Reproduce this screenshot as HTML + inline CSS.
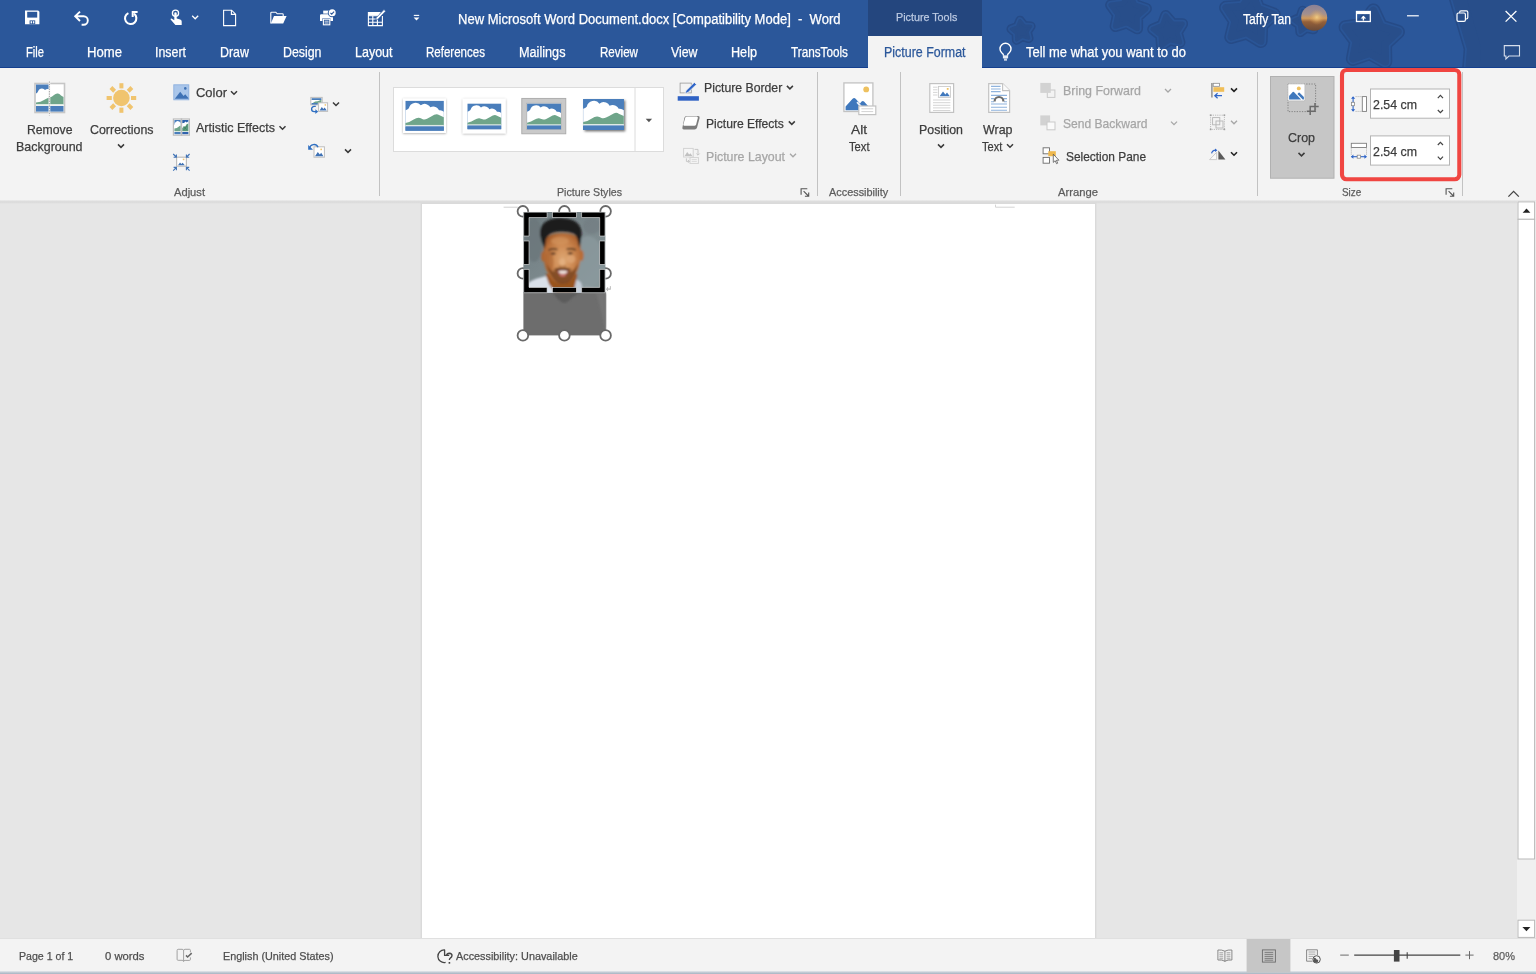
<!DOCTYPE html>
<html lang="en">
<head>
<meta charset="utf-8">
<title>New Microsoft Word Document.docx [Compatibility Mode] - Word</title>
<style>
html,body{margin:0;padding:0;}
body{width:1536px;height:974px;overflow:hidden;background:#e6e6e6;font-family:"Liberation Sans",sans-serif;}
#app{position:relative;width:1536px;height:974px;overflow:hidden;}
.a{position:absolute;}
.t{position:absolute;white-space:pre;line-height:1;transform-origin:0 0;font-family:"Liberation Sans",sans-serif;-webkit-text-stroke:0.25px currentColor;}
svg{position:absolute;overflow:visible;}
.sep{position:absolute;width:1px;background:#c2c2c2;top:72px;height:124px;}
</style>
</head>
<body>
<div id="app">

<!-- ===== title bar + tab row ===== -->
<div class="a" id="titlebar" style="left:0;top:0;width:1536px;height:68px;background:#2b579a;"></div>
<!--STARS-START-->
<svg id="stars" width="1536" height="68" viewBox="0 0 1536 68" style="left:0;top:0;overflow:hidden" fill="none">
<polygon points="1020.0,20.4 1024.2,25.7 1030.9,26.2 1027.2,31.8 1028.8,38.4 1022.3,36.5 1016.6,40.1 1016.3,33.3 1011.2,29.0 1017.5,26.6" fill="#264b87" stroke="#264b87" stroke-width="9.4" stroke-linejoin="round"/>
<polygon points="1020.0,20.4 1024.2,25.7 1030.9,26.2 1027.2,31.8 1028.8,38.4 1022.3,36.5 1016.6,40.1 1016.3,33.3 1011.2,29.0 1017.5,26.6" fill="#2a5596" stroke="#2a5596" stroke-width="6.4" stroke-linejoin="round"/>
<polygon points="1020.0,20.4 1024.2,25.7 1030.9,26.2 1027.2,31.8 1028.8,38.4 1022.3,36.5 1016.6,40.1 1016.3,33.3 1011.2,29.0 1017.5,26.6" fill="#284e8a" stroke="#284e8a" stroke-width="2.9" stroke-linejoin="round"/>
<polygon points="1129.8,-5.9 1134.7,4.9 1146.0,8.7 1137.2,16.6 1137.2,28.5 1126.8,22.6 1115.5,26.2 1117.9,14.6 1111.0,5.0 1122.8,3.7" fill="#264b87" stroke="#264b87" stroke-width="11.7" stroke-linejoin="round"/>
<polygon points="1129.8,-5.9 1134.7,4.9 1146.0,8.7 1137.2,16.6 1137.2,28.5 1126.8,22.6 1115.5,26.2 1117.9,14.6 1111.0,5.0 1122.8,3.7" fill="#2a5596" stroke="#2a5596" stroke-width="8.7" stroke-linejoin="round"/>
<polygon points="1129.8,-5.9 1134.7,4.9 1146.0,8.7 1137.2,16.6 1137.2,28.5 1126.8,22.6 1115.5,26.2 1117.9,14.6 1111.0,5.0 1122.8,3.7" fill="#284e8a" stroke="#284e8a" stroke-width="5.2" stroke-linejoin="round"/>
<polygon points="1165.7,15.5 1172.4,23.4 1182.6,23.8 1177.2,32.5 1180.0,42.4 1170.0,40.0 1161.5,45.7 1160.7,35.4 1152.7,29.1 1162.2,25.2" fill="#264b87" stroke="#264b87" stroke-width="11.0" stroke-linejoin="round"/>
<polygon points="1165.7,15.5 1172.4,23.4 1182.6,23.8 1177.2,32.5 1180.0,42.4 1170.0,40.0 1161.5,45.7 1160.7,35.4 1152.7,29.1 1162.2,25.2" fill="#2a5596" stroke="#2a5596" stroke-width="8.0" stroke-linejoin="round"/>
<polygon points="1165.7,15.5 1172.4,23.4 1182.6,23.8 1177.2,32.5 1180.0,42.4 1170.0,40.0 1161.5,45.7 1160.7,35.4 1152.7,29.1 1162.2,25.2" fill="#284e8a" stroke="#284e8a" stroke-width="4.5" stroke-linejoin="round"/>
<polygon points="1252.3,-6.5 1258.5,8.7 1273.9,14.4 1261.4,24.9 1260.8,41.3 1246.8,32.7 1231.1,37.1 1235.0,21.2 1225.9,7.6 1242.2,6.4" fill="#264b87" stroke="#264b87" stroke-width="13.6" stroke-linejoin="round"/>
<polygon points="1252.3,-6.5 1258.5,8.7 1273.9,14.4 1261.4,24.9 1260.8,41.3 1246.8,32.7 1231.1,37.1 1235.0,21.2 1225.9,7.6 1242.2,6.4" fill="#2a5596" stroke="#2a5596" stroke-width="10.6" stroke-linejoin="round"/>
<polygon points="1252.3,-6.5 1258.5,8.7 1273.9,14.4 1261.4,24.9 1260.8,41.3 1246.8,32.7 1231.1,37.1 1235.0,21.2 1225.9,7.6 1242.2,6.4" fill="#284e8a" stroke="#284e8a" stroke-width="7.1" stroke-linejoin="round"/>
<polygon points="1302.6,10.5 1307.6,15.9 1315.0,15.9 1311.3,22.4 1313.5,29.4 1306.3,27.9 1300.3,32.2 1299.5,24.9 1293.6,20.5 1300.3,17.5" fill="#264b87" stroke="#264b87" stroke-width="9.7" stroke-linejoin="round"/>
<polygon points="1302.6,10.5 1307.6,15.9 1315.0,15.9 1311.3,22.4 1313.5,29.4 1306.3,27.9 1300.3,32.2 1299.5,24.9 1293.6,20.5 1300.3,17.5" fill="#2a5596" stroke="#2a5596" stroke-width="6.7" stroke-linejoin="round"/>
<polygon points="1302.6,10.5 1307.6,15.9 1315.0,15.9 1311.3,22.4 1313.5,29.4 1306.3,27.9 1300.3,32.2 1299.5,24.9 1293.6,20.5 1300.3,17.5" fill="#284e8a" stroke="#284e8a" stroke-width="3.2" stroke-linejoin="round"/>
<polygon points="1373.4,10.6 1380.9,26.6 1397.8,31.8 1384.9,43.9 1385.2,61.6 1369.7,53.1 1353.0,58.8 1356.3,41.4 1345.7,27.3 1363.2,25.0" fill="#264b87" stroke="#264b87" stroke-width="14.2" stroke-linejoin="round"/>
<polygon points="1373.4,10.6 1380.9,26.6 1397.8,31.8 1384.9,43.9 1385.2,61.6 1369.7,53.1 1353.0,58.8 1356.3,41.4 1345.7,27.3 1363.2,25.0" fill="#2a5596" stroke="#2a5596" stroke-width="11.2" stroke-linejoin="round"/>
<polygon points="1373.4,10.6 1380.9,26.6 1397.8,31.8 1384.9,43.9 1385.2,61.6 1369.7,53.1 1353.0,58.8 1356.3,41.4 1345.7,27.3 1363.2,25.0" fill="#284e8a" stroke="#284e8a" stroke-width="7.7" stroke-linejoin="round"/>
<polygon points="1455.0,-16.0 1520.1,-31.6 1575.3,-69.6 1610.3,-12.5 1663.4,28.3 1619.9,79.2 1597.6,142.3 1535.7,116.7 1468.8,114.9 1474.0,48.2" fill="#264b87" stroke="#264b87" stroke-width="20.5" stroke-linejoin="round"/>
<polygon points="1455.0,-16.0 1520.1,-31.6 1575.3,-69.6 1610.3,-12.5 1663.4,28.3 1619.9,79.2 1597.6,142.3 1535.7,116.7 1468.8,114.9 1474.0,48.2" fill="#2a5596" stroke="#2a5596" stroke-width="17.5" stroke-linejoin="round"/>
<polygon points="1455.0,-16.0 1520.1,-31.6 1575.3,-69.6 1610.3,-12.5 1663.4,28.3 1619.9,79.2 1597.6,142.3 1535.7,116.7 1468.8,114.9 1474.0,48.2" fill="#284e8a" stroke="#284e8a" stroke-width="14.0" stroke-linejoin="round"/>
<defs><linearGradient id="avg" x1="0" y1="0" x2="0" y2="1"><stop offset="0" stop-color="#8a8196"/><stop offset="0.360" stop-color="#a3908f"/><stop offset="0.520" stop-color="#cf9a5e"/><stop offset="0.660" stop-color="#94603a"/><stop offset="1" stop-color="#6a4a38"/></linearGradient>
<radialGradient id="avr" cx="0.600" cy="0.480" r="0.300"><stop offset="0" stop-color="#f3cf86" stop-opacity="0.900"/><stop offset="1" stop-color="#e0a050" stop-opacity="0"/></radialGradient>
</defs>
<circle cx="1314.200" cy="17.700" r="13" fill="url(#avg)"/>
<circle cx="1314.200" cy="17.700" r="13" fill="url(#avr)"/>
</svg><!--STARS-END-->
<div class="a" style="left:0;top:67px;width:1536px;height:1px;background:#143f8f;"></div>
<div class="a" id="picturetools" style="left:868px;top:0;width:114px;height:36px;background:#24467e;"></div>
<div class="a" id="activetab" style="left:868px;top:35.500px;width:114px;height:33.500px;background:#f3f3f3;"></div>

<!-- ===== ribbon ===== -->
<div class="a" id="ribbon" style="left:0;top:68px;width:1536px;height:132px;background:#f3f3f3;"></div>
<div class="a" style="left:0;top:199.800px;width:1536px;height:4.200px;background:linear-gradient(#eeeeee 0%,#dddddd 35%,#dcdcdc 60%,#e6e6e6 100%);"></div>
<div class="sep" style="left:379px;"></div>
<div class="sep" style="left:817px;"></div>
<div class="sep" style="left:900px;"></div>
<div class="sep" style="left:1257px;"></div>
<div class="sep" style="left:1462px;"></div>

<!--QAT-START-->
<svg id="qat" width="1536" height="70" viewBox="0 0 1536 70" style="left:0;top:0" fill="none" stroke="none">
<!-- save -->
<path d="M25 10.6h13.2l1.2 1.2v12.4H25z" fill="#fff"/>
<rect x="27.2" y="11.8" width="10" height="5.8" fill="#2b579a"/>
<rect x="29.6" y="20.4" width="5.6" height="3.8" fill="#2b579a"/>
<rect x="30.6" y="21.2" width="1.4" height="2.2" fill="#fff"/>
<rect x="32.9" y="21.2" width="1.4" height="2.2" fill="#fff"/>
<!-- undo -->
<path d="M80 11.6L75.2 16.3L80 21M75.6 16.3H83.6a4.2 4.2 0 0 1 0 8.4H81.6" stroke="#fff" stroke-width="1.9" stroke-linecap="butt" stroke-linejoin="miter"/>
<!-- repeat -->
<path d="M128.4 13.1a5.7 5.7 0 1 0 5.6 0.6" stroke="#fff" stroke-width="2.1"/>
<path d="M137.6 11.9H132.700V17" stroke="#fff" stroke-width="2"/>
<!-- touch -->
<circle cx="175.5" cy="13.300" r="3.100" stroke="#fff" stroke-width="1.300"/>
<path d="M174.300 13.400a1.200 1.200 0 0 1 2.400 0V18.400L180.200 19.600Q181.700 20.200 181.700 21.600V25H175.400L170.600 19.600Q170.300 18.400 171.500 18.400L174.300 20.300Z" fill="#fff"/>
<path d="M192.2 15.8l3 3l3-3" stroke="#fff" stroke-width="1.3"/>
<!-- new doc -->
<path d="M223.6 10.2h8l4 4v11.4h-12z M231.4 10.4v4h4" stroke="#fff" stroke-width="1.1"/>
<!-- open folder -->
<path d="M270.8 23.4v-10.4q0-0.8 0.8-0.8h4.2l1.4 1.6h5.2q0.8 0 0.8 0.8v1.4" stroke="#fff" stroke-width="1.1"/>
<path d="M270.8 23.6l3.2-7.6h12.6l-3.4 7.6z" fill="#fff"/>
<!-- printer check -->
<path d="M320 15.4q0-1.2 1.2-1.2h10.600q1.2 0 1.2 1.200v5.6h-2.6v-2.8h-8v2.8h-2.4z" fill="#fff"/>
<rect x="323.200" y="10.600" width="6.000" height="3.000" fill="#fff"/>
<rect x="323.4" y="19.2" width="6.4" height="5.6" stroke="#fff" stroke-width="1.1"/>
<path d="M324.6 21.200h4M324.6 23.000h4" stroke="#fff" stroke-width="0.8"/>
<circle cx="332.2" cy="12.8" r="4.4" fill="#2b579a"/>
<circle cx="332.2" cy="12.8" r="3.5" fill="#fff"/>
<path d="M330.400 12.900l1.300 1.300l2.400-2.600" stroke="#2b579a" stroke-width="1.1"/>
<!-- table pen -->
<path d="M368.400 12.600h11.6v3.200h-11.6zM368.400 15.800v9.800h14v-9.600M372.800 15.800v9.800M377.400 17.800v7.800M368.400 19h8M368.400 22.300h14" stroke="#fff" stroke-width="1.1"/>
<rect x="368.400" y="12.600" width="11.000" height="3.000" fill="#fff"/>
<path d="M384.000 9.600l1.600 1.600l-7.600 8.000l-2.400 0.800l0.800-2.400z" fill="#fff" stroke="#2b579a" stroke-width="0.600"/>
<!-- customize -->
<path d="M413.800 15.400h5.400" stroke="#fff" stroke-width="1.100"/>
<path d="M413.600 17.400h5.800l-2.900 3.200z" fill="#fff"/>
<!-- bulb -->
<path d="M1003.500 55.800V55.200Q1003.200 54 1001.700 52.800A5.500 5.500 0 1 1 1009.300 52.800Q1007.800 54 1007.500 55.200V55.800" stroke="#fff" stroke-width="1.400"/>
<rect x="1002.900" y="55.400" width="5.200" height="3" fill="#e6ebf3"/>
<rect x="1004" y="58.400" width="3" height="2.300" fill="#ccd5e5"/>
<!-- ribbon display options -->
<rect x="1356.500" y="11.500" width="13.800" height="10" stroke="#fff" stroke-width="1.300"/>
<rect x="1356.500" y="11.500" width="13.800" height="2.600" fill="#fff"/>
<path d="M1363.400 20.600v-4.400" stroke="#fff" stroke-width="1.400"/>
<path d="M1360.600 18.600l2.800-2.900l2.800 2.900z" fill="#fff"/>
<!-- minimize -->
<path d="M1407.000 15.800h11.800" stroke="#fff" stroke-width="1.200"/>
<!-- restore -->
<rect x="1457.000" y="13.000" width="8.400" height="8.400" rx="1.400" stroke="#fff" stroke-width="1.200"/>
<path d="M1459.600 12.800v-0.600q0-1.400 1.400-1.400h5.400q1.400 0 1.400 1.400v5.400q0 1.400-1.400 1.400h-0.600" stroke="#fff" stroke-width="1.200"/>
<!-- close -->
<path d="M1505.600 11.000l10.800 10.600M1516.400 11.000l-10.800 10.600" stroke="#fff" stroke-width="1.300"/>
<!-- comments -->
<path d="M1504.300 45.600h15.200v10.400h-10.600l-3.000 3.000v-3.000h-1.600z" stroke="#d6deec" stroke-width="1.100"/>
</svg>
<!--QAT-END-->
<!--RIB1-START-->
<svg id="rib1" width="1536" height="210" viewBox="0 0 1536 210" style="left:0;top:0" fill="none" stroke="none">
<defs>
<g id="chev"><path d="M0 0l3 3l3-3" stroke="#3a3a3a" stroke-width="1.500" fill="none"/></g>
<g id="chevg"><path d="M0 0l3 3l3-3" stroke="#a6a6a6" stroke-width="1.3" fill="none"/></g>
<!-- landscape thumbnail 40x30 : sky, cloud, hill, band -->
<g id="land">
<rect x="0" y="0" width="40" height="30" fill="#4a7ebb"/>
<path d="M0 26V9.500q2-0.500 3.500-2q1-4.500 5.500-5.500q4.500-1 7 2.500q3-2.500 6.500-1q2.500 1 3.500 3q3-1.500 6 0q2 1 3 3q3-0.500 5 1.500V26z" fill="#fff"/>
<path d="M0 25V22.300q5-1 8.500-3.500q3-2 5.500-1.800q2 0.400 4 1.400q2 0.800 4.500-0.400q4-2 7.500-4q3-1.500 5 0.300l5 2.200V25z" fill="#6fa58a"/>
<rect x="0" y="24.200" width="40" height="1.500" fill="#dfe9e4"/>
<rect x="0" y="25.600" width="40" height="4.400" fill="#4a7ebb"/>
</g>
</defs>
<!-- Remove Background -->
<rect x="35" y="83.500" width="29.500" height="29" fill="#fff" stroke="#c6c6c6" stroke-width="1.600"/>
<rect x="36" y="84.500" width="13" height="13" fill="#4a7ebb"/>
<path d="M36 103V93.500q1.500-0.500 2-2q1-3 4-3q2 0 3 1.500q1.500-1.500 3.500-1h0.800V103z" fill="#fff"/>
<path d="M36 104.500V102.600q5-0.300 8-2.600q2-1.500 5-2.500q3-0.500 5-2.500q2-2 4-1.500q2 0.300 3 2l2.500 1.500V104.500z" fill="#6fa58a"/>
<rect x="36" y="104.300" width="27.500" height="1.700" fill="#eef3ef"/>
<rect x="36" y="106" width="27.500" height="5.600" fill="#4a7ebb"/>
<path d="M49.400 81.500V115.500" stroke="#f3f3f3" stroke-width="1.800"/>
<path d="M49.400 81.500V115.500" stroke="#8a8a8a" stroke-width="0.800" stroke-dasharray="1.200 1.200"/>
<!-- Corrections sun -->
<g fill="#f0c46e">
<circle cx="121.400" cy="98" r="8.300"/>
<g id="ray"><rect x="119.400" y="83.200" width="4" height="5.200"/></g>
<use href="#ray" transform="rotate(45 121.400 98)"/>
<use href="#ray" transform="rotate(90 121.400 98)"/>
<use href="#ray" transform="rotate(135 121.400 98)"/>
<use href="#ray" transform="rotate(180 121.400 98)"/>
<use href="#ray" transform="rotate(225 121.400 98)"/>
<use href="#ray" transform="rotate(270 121.400 98)"/>
<use href="#ray" transform="rotate(315 121.400 98)"/>
</g>
<use href="#chev" x="118" y="144.400"/>
<!-- Color -->
<rect x="173.800" y="84.800" width="15" height="15" fill="#aac6ea" stroke="#8db0df" stroke-width="0.900"/>
<path d="M174.800 98.800l5.400-7l3.400 4.200l1.600-1.800l3.200 3.800v0.800z" fill="#3f72b5"/>
<circle cx="185.300" cy="88.400" r="1.300" fill="#3f72b5"/>
<use href="#chev" x="231" y="91.300"/>
<!-- Artistic effects -->
<rect x="173.400" y="119" width="16" height="16.200" fill="#fff" stroke="#bdbdbd" stroke-width="1.200"/>
<rect x="174.400" y="120" width="6.300" height="5" fill="#4a7ebb"/>
<path d="M174.400 130V124q1-2.500 3-3q2 0 3.300 2V130z" fill="#fff"/>
<path d="M174.400 131.200V128.600q3-0.300 6.300-3.300V131.200z" fill="#6fa58a"/>
<rect x="174.400" y="132" width="6.300" height="2.200" fill="#4a7ebb"/>
<rect x="182.200" y="120" width="6.200" height="3.600" fill="#2f62ad"/>
<path d="M182.200 123h2l1-1.400l1.600 1l1.600-1.400v3.400h-6.200z" fill="#fff"/>
<path d="M182.200 131.200V128q2-2 3-1.600q1.200-3 3.200-3V131.200z" fill="#5d9a7c"/>
<path d="M183.600 126.400l3 3.200M186.800 126.200l-3 3.600" stroke="#3c7a5c" stroke-width="0.700"/>
<rect x="182.200" y="132" width="6.200" height="2.200" fill="#2f62ad"/>
<path d="M181.450 118.400V135.800" stroke="#bdbdbd" stroke-width="1.400"/>
<use href="#chev" x="279.500" y="126.300"/>
<!-- Compress -->
<rect x="176.600" y="157.200" width="9.800" height="9" fill="#fff" stroke="#bdbdbd" stroke-width="1.200"/>
<path d="M178 165.200l2-2.800l1.400 1.600l1.200-1.200l2.200 2.400z" fill="#3f72b5"/>
<rect x="182.800" y="158.600" width="1.600" height="1.600" fill="#f0c46e"/>
<g stroke="#3f72b5" stroke-width="1.100">
<path d="M173.200 154l3 3M176.400 154.400v2.800h-2.800"/>
<path d="M189.600 154l-3 3M186.400 154.400v2.800h2.800"/>
<path d="M173.200 170.600l3-3M176.400 170.200v-2.800h-2.800"/>
<path d="M189.600 170.600l-3-3M186.400 170.200v-2.800h2.800"/>
</g>
<!-- Change picture -->
<rect x="310.800" y="97.400" width="11.400" height="7.400" fill="#fff" stroke="#bdbdbd" stroke-width="1"/>
<rect x="311.600" y="98.200" width="9.800" height="1.800" fill="#4a7ebb"/>
<path d="M311.600 103.800l3.500-2.200l2.500-0.400l3.800-1.400v4z" fill="#6fa58a"/>
<rect x="311.600" y="103" width="6" height="1.600" fill="#4a7ebb"/>
<rect x="318.600" y="102.800" width="9" height="8.600" fill="#fff" stroke="#bdbdbd" stroke-width="1"/>
<path d="M319.600 110.400l2.200-3.400l1.600 2l1.200-1.400l2.200 2.800z" fill="#3f72b5"/>
<rect x="324.600" y="104.200" width="1.500" height="1.500" fill="#f0c46e"/>
<path d="M315.800 106.400h-1.600a2.600 2.600 0 0 0 0 5.200h3.200" stroke="#2f6fc1" stroke-width="1.400"/>
<path d="M315.400 109.200l2.600 2.400l-2.600 2.400z" fill="#2f6fc1"/>
<use href="#chev" x="333" y="102.500"/>
<!-- Reset picture -->
<rect x="314" y="146.800" width="10.400" height="10.400" fill="#fff" stroke="#bdbdbd" stroke-width="1"/>
<path d="M315 156.200l2.800-4.200l2 2.400l1.400-1.600l2.200 3.400z" fill="#3f72b5"/>
<rect x="320.400" y="148.600" width="1.600" height="1.600" fill="#f0c46e"/>
<path d="M309.600 148.600a4.400 4.400 0 0 1 8.400-1.400" stroke="#2f6fc1" stroke-width="1.400"/>
<path d="M308.200 145v4.800h4.800z" fill="#2f6fc1"/>
<use href="#chev" x="345" y="149.400"/>
</svg>
<!--RIB1-END-->
<!--RIB2-START-->
<svg id="rib2" width="1536" height="210" viewBox="0 0 1536 210" style="left:0;top:0" fill="none" stroke="none">
<defs>
<filter id="sh1" x="-20%" y="-20%" width="140%" height="150%"><feDropShadow dx="0" dy="0.600" stdDeviation="0.900" flood-color="#000" flood-opacity="0.350"/></filter>
<filter id="sh4" x="-20%" y="-20%" width="150%" height="150%"><feDropShadow dx="1.400" dy="1.400" stdDeviation="0.800" flood-color="#000" flood-opacity="0.550"/></filter>
</defs>
<!-- gallery -->
<rect x="393.500" y="87.500" width="270" height="64" fill="#fff" stroke="#dcdcdc" stroke-width="1"/>
<path d="M635 88V151" stroke="#dcdcdc" stroke-width="1"/>
<path d="M645.700 118.700h6.400l-3.200 3.600z" fill="#555"/>
<!-- thumb1 -->
<rect x="403" y="98.600" width="43" height="34.400" fill="#fff" filter="url(#sh1)"/>
<use href="#land" transform="translate(405.500 100.900) scale(0.9575 0.9933)"/>
<!-- thumb2 -->
<rect x="462.700" y="98.800" width="43" height="34.600" fill="#fff" filter="url(#sh1)"/>
<use href="#land" transform="translate(467.500 103.700) scale(0.8425 0.85)"/>
<!-- thumb3 -->
<rect x="521.800" y="98.400" width="44" height="35.400" fill="#c9c9c9" stroke="#a9a9a9" stroke-width="0.900"/>
<rect x="526.600" y="103.200" width="34.800" height="26.400" fill="#fff" stroke="#b4b4b4" stroke-width="0.800"/>
<use href="#land" transform="translate(527.100 103.700) scale(0.8475 0.85)"/>
<!-- thumb4 -->
<rect x="583.200" y="99" width="40.600" height="31" fill="#4a7ebb" filter="url(#sh4)"/>
<use href="#land" transform="translate(583.200 99) scale(1.015 1.0333)"/>
<!-- Picture Border -->
<rect x="680.100" y="83.100" width="11.200" height="9.800" stroke="#9a9a9a" stroke-width="0.800"/>
<path d="M694.300 82.400l2.200 2l-8.400 8l-3.300 1.300l1.400-3.300z" fill="#2f65c8" stroke="#f3f3f3" stroke-width="0.800"/>
<rect x="677.700" y="96.200" width="21.200" height="4.500" fill="#2f62c4"/>
<use href="#chev" x="786.900" y="85.900"/>
<!-- Picture Effects -->
<path d="M686.800 115.900h11.400q1.800 0.200 1.400 2l-2.600 9.800q-0.600 1.800-2.400 1.800h-10.800q-1.800-0.200-1.400-2l2-9.800q0.400-1.600 2.400-1.800z" fill="#7d7d7d"/>
<path d="M687 116.500h9.800q1.300 0.100 1 1.400l-1.700 6.600q-0.500 1.300-1.700 1.300h-10q-1.300-0.100-1-1.400l1.800-6.600q0.500-1.200 1.800-1.300z" fill="#fff"/>
<use href="#chev" x="788.800" y="121.400"/>
<!-- Picture Layout (disabled) -->
<g opacity="0.550">
<rect x="683.600" y="148.400" width="9.600" height="8.600" fill="#fafafa" stroke="#b8b8b8" stroke-width="1"/>
<path d="M684.600 156l2.600-4l2 2.400l1.200-1.200l2 2.800z" fill="#9a9a9a"/>
<rect x="690" y="157.600" width="8.400" height="5.800" fill="#fafafa" stroke="#b8b8b8" stroke-width="1"/>
<path d="M691.600 159.600h5.200M691.600 161.400h5.200" stroke="#b8b8b8" stroke-width="0.800"/>
<path d="M694.600 149.400h3.400v5.600M696.400 153.600l1.600 1.600l1.600-1.600" stroke="#9a9a9a" stroke-width="0.900"/>
<path d="M686.400 158.400v3h2.800M688 160l1.400 1.400l-1.400 1.400" stroke="#9a9a9a" stroke-width="0.900"/>
</g>
<use href="#chevg" x="790" y="153.800"/>
<!-- dialog launcher -->
<g id="dl" stroke="#555" stroke-width="1.100"><path d="M801.100 194.800v-6h6.200"/><path d="M803.600 191.200l4.800 4.800M808.700 192.400v3.800h-3.800"/></g>
<!-- Alt text -->
<rect x="843.900" y="82.900" width="29" height="28.600" fill="#fff" stroke="#c2c2c2" stroke-width="1.300"/>
<circle cx="866.200" cy="89.400" r="2.900" fill="#eec15f"/>
<path d="M845.600 110.200v-3.800l7-7.600q1.500-1.500 3 0l4.400 4.600l1.600-1.800q1.200-1.200 2.400 0l7.600 8.400v0.200z" fill="#3f78bd"/>
<path d="M857.800 101.600l4 4.400l-1.200 1.400l-4.200-4.600z" fill="#fff" opacity="0.900"/>
<rect x="858.800" y="106" width="17" height="8.600" fill="#fff" stroke="#c2c2c2" stroke-width="1.200"/>
<path d="M861.400 108.800h11.800M861.400 111.600h11.800" stroke="#d2d2d2" stroke-width="1"/>
<!-- Position -->
<rect x="929.800" y="83.600" width="23.800" height="28.800" fill="#fff" stroke="#c2c2c2" stroke-width="1.200"/>
<path d="M933 87.200h4.400M933 89.800h4.400M933 92.400h4.400M933 95h4.400M933 100h17.400M933 102.700h17.400M933 105.300h17.400M933 107.900h17.400M933 110.500h17.400" stroke="#d0d0d0" stroke-width="0.900"/>
<rect x="938.400" y="86.400" width="12" height="11" fill="#fff" stroke="#c9c9c9" stroke-width="0.900"/>
<path d="M939.600 96.200l3.400-4.600l2.400 2.800l1.600-1.800l2.800 3.600z" fill="#3f78bd"/>
<rect x="946.800" y="88" width="1.800" height="1.800" fill="#eec15f"/>
<use href="#chev" x="938" y="144.400"/>
<!-- Wrap Text -->
<path d="M988.700 83.600h13.900l7 7v21.800h-20.900z" fill="#fff" stroke="#c2c2c2" stroke-width="1.200"/>
<path d="M1002.600 83.600v7h7" stroke="#c2c2c2" stroke-width="1.100" fill="#fafafa"/>
<path d="M991 86.400h9.600M991 89h9.600M991 91.600h9.600M991 95.400h16M991 98.600h3.400M1003.400 98.600h3.600M991 101.800h3M1004 101.800h3M991 104h16M991 107.200h16M991 110.200h16" stroke="#8fb3dd" stroke-width="1.100"/>
<path d="M994.600 101.400a4.400 4.400 0 0 1 8.800 0" stroke="#6b6b6b" stroke-width="2.200"/>
<use href="#chev" x="1007" y="144.200"/>
<!-- Bring Forward (disabled) -->
<rect x="1047.300" y="90" width="7.600" height="7.400" stroke="#c9c9c9" stroke-width="1"/>
<rect x="1040.300" y="82.900" width="10.500" height="10" fill="#d2d2d2"/>
<use href="#chevg" x="1165" y="89"/>
<!-- Send Backward (disabled) -->
<rect x="1040.300" y="115.400" width="9.800" height="10" fill="#d2d2d2"/>
<rect x="1047" y="122" width="8" height="7.800" fill="#fafafa" stroke="#c9c9c9" stroke-width="1"/>
<use href="#chevg" x="1171" y="121.600"/>
<!-- Selection Pane -->
<rect x="1043.100" y="147.800" width="6.400" height="6" fill="#fff" stroke="#6b6b6b" stroke-width="0.900"/>
<rect x="1043.100" y="157.400" width="6.400" height="5.800" fill="#fff" stroke="#6b6b6b" stroke-width="0.900"/>
<rect x="1048.300" y="151.200" width="7.500" height="5" fill="#eeb84e"/>
<path d="M1053.300 154.200v8.200l1.900-1.700l1.300 3l1.200-0.500l-1.300-2.900l2.500-0.100z" fill="#fff" stroke="#444" stroke-width="0.700"/>
<!-- Align -->
<path d="M1211.900 82.900V97.600" stroke="#8a8a8a" stroke-width="1.400"/>
<rect x="1213.200" y="83.300" width="6.400" height="3" fill="#fff" stroke="#8a8a8a" stroke-width="0.800"/>
<rect x="1213.400" y="87.200" width="10.800" height="4.600" fill="#f0be57"/>
<path d="M1222 95.700h-7M1217.600 93.200l-2.800 2.500l2.800 2.500" stroke="#2f65c8" stroke-width="1.200"/>
<path d="M1231 88.400l3 3l3-3" stroke="#222" stroke-width="1.600"/>
<!-- Group (disabled) -->
<g stroke="#b5b5b5" stroke-width="0.900">
<rect x="1210.600" y="115.200" width="13.800" height="14.200" stroke-dasharray="1.200 1"/>
<rect x="1212.600" y="117.600" width="7.200" height="7.200"/>
<rect x="1216" y="121" width="7" height="7" />
</g>
<g fill="#a0a0a0"><rect x="1209.800" y="114.400" width="1.600" height="1.600"/><rect x="1223.600" y="114.400" width="1.600" height="1.600"/><rect x="1209.800" y="128.600" width="1.600" height="1.600"/><rect x="1223.600" y="128.600" width="1.600" height="1.600"/></g>
<path d="M1231 120.800l3 3l3-3" stroke="#a6a6a6" stroke-width="1.300"/>
<!-- Rotate -->
<path d="M1218.400 150.600v9h7z" fill="#5a5a5a"/>
<path d="M1216.600 152.400v7.200h-7z" fill="#fafafa" stroke="#c6c6c6" stroke-width="0.900"/>
<path d="M1211.600 153.400q0.600-3 4.200-3.200" stroke="#2f65c8" stroke-width="1.200"/>
<path d="M1215 148.400l2.400 1.800l-2.400 1.800z" fill="#2f65c8"/>
<path d="M1231 152.200l3 3l3-3" stroke="#222" stroke-width="1.600"/>
</svg>
<!--RIB2-END-->
<!--RIB3-START-->
<svg id="rib3" width="1536" height="210" viewBox="0 0 1536 210" style="left:0;top:0" fill="none" stroke="none">
<!-- Crop button (active) -->
<rect x="1270.500" y="76.500" width="63.500" height="101.700" fill="#c6c6c6" stroke="#b1b1b1" stroke-width="1"/>
<rect x="1288" y="84" width="27.600" height="27.600" stroke="#7d7d7d" stroke-width="0.900" stroke-dasharray="1.300 1.300"/>
<rect x="1287.800" y="83.800" width="17.200" height="17.200" rx="1.400" fill="#fff" stroke="#bdbdbd" stroke-width="1"/>
<circle cx="1298.800" cy="88.400" r="1.950" fill="#eec15f"/>
<path d="M1289.100 99.400v-3.400l3.600-3.900q0.600-0.600 1.200 0l7.200 7.300z" fill="#3f78bd"/>
<path d="M1297.400 93.900l1.200-1.200q0.500-0.500 1 0l4.300 4.200v2.500h-1.200z" fill="#3f78bd"/>
<path d="M1315 103V111.200H1306.800M1318.700 106.400H1310.200V114.900" stroke="#6a6a6a" stroke-width="1.500"/>
<use href="#chev" x="1298.500" y="152.900"/>
<!-- red highlight box -->
<rect x="1342" y="70" width="117.300" height="109.300" rx="4.500" stroke="#f04541" stroke-width="4.100"/>
<!-- inputs -->
<rect x="1370.500" y="89" width="79" height="29.200" fill="#fff" stroke="#b4b4b4" stroke-width="1"/>
<rect x="1370.500" y="135.900" width="79" height="29.200" fill="#fff" stroke="#b4b4b4" stroke-width="1"/>
<g stroke="#444" stroke-width="1.200">
<path d="M1437.800 98.100l2.600-2.700l2.600 2.700"/><path d="M1437.800 110l2.600 2.700l2.600-2.700"/>
<path d="M1437.800 145l2.600-2.700l2.600 2.700"/><path d="M1437.800 156.700l2.600 2.700l2.600-2.700"/>
</g>
<!-- height icon -->
<rect x="1362.300" y="96.600" width="4.200" height="14.800" fill="#fff" stroke="#7d7d7d" stroke-width="0.900"/>
<path d="M1355.600 96.600h6.600M1355.600 111.400h6.600" stroke="#9a9a9a" stroke-width="0.800" stroke-dasharray="1 1"/>
<path d="M1353.100 97v14" stroke="#2f65c8" stroke-width="1.100"/>
<path d="M1351 98.800l2.100-2.600l2.100 2.600zM1351 109.200l2.100 2.600l2.100-2.600z" fill="#2f65c8"/>
<rect x="1351.600" y="102.300" width="3" height="3.400" fill="#fff" stroke="#8a8a8a" stroke-width="0.800"/>
<!-- width icon -->
<rect x="1351.300" y="143.300" width="15.200" height="4.200" fill="#fff" stroke="#7d7d7d" stroke-width="0.900"/>
<path d="M1351.300 147.600v7M1366.500 147.600v7" stroke="#9a9a9a" stroke-width="0.800" stroke-dasharray="1 1"/>
<path d="M1351.600 156.700h14.600" stroke="#2f65c8" stroke-width="1.100"/>
<path d="M1353.400 154.600l-2.600 2.100l2.600 2.100zM1364.400 154.600l2.600 2.100l-2.600 2.100z" fill="#2f65c8"/>
<rect x="1357.200" y="155.200" width="3.400" height="3" fill="#fff" stroke="#8a8a8a" stroke-width="0.800"/>
<!-- dialog launcher (size) -->
<g stroke="#555" stroke-width="1.100"><path d="M1446.100 194.800v-6h6.200"/><path d="M1448.600 191.200l4.800 4.800M1453.700 192.400v3.800h-3.800"/></g>
<!-- collapse ribbon -->
<path d="M1508.400 196.600l5.200-5.200l5.200 5.200" stroke="#444" stroke-width="1.300"/>
</svg>
<!--RIB3-END-->

<!-- ===== document area ===== -->
<div class="a" id="page" style="left:421.600px;top:204.400px;width:673.700px;height:735px;background:#fff;box-shadow:0 0 0 1.400px #dadada;"></div>
<!--DOC-START-->
<svg id="doc" width="1536" height="974" viewBox="0 0 1536 974" style="left:0;top:0" fill="none" stroke="none">
<defs>
<filter id="blur1" x="-5%" y="-5%" width="110%" height="110%"><feGaussianBlur stdDeviation="1.050"/></filter>
<filter id="blur2" x="-5%" y="-5%" width="110%" height="110%"><feGaussianBlur stdDeviation="0.500"/></filter>
<clipPath id="photoclip"><rect x="523.400" y="212" width="82" height="81"/></clipPath>
<linearGradient id="bgg" x1="0" y1="0" x2="1" y2="1"><stop offset="0" stop-color="#6f7c80"/><stop offset="0.500" stop-color="#7b888c"/><stop offset="1" stop-color="#8a9a9c"/></linearGradient>
<radialGradient id="skin" cx="0.520" cy="0.520" r="0.600"><stop offset="0" stop-color="#dea874"/><stop offset="0.450" stop-color="#cf8c55"/><stop offset="0.800" stop-color="#b86f3a"/><stop offset="1" stop-color="#9a5527"/></radialGradient>
<g id="hdl"><circle r="5.300" fill="#fff" stroke="#696969" stroke-width="1.800"/></g>
</defs>
<!-- header/margin marks -->
<path d="M503.600 207.200h14.200" stroke="#d0d0d0" stroke-width="1"/>
<path d="M995.500 204.600v2.600h19.200" stroke="#d4d4d4" stroke-width="1"/>
<!-- selection handles behind -->
<use href="#hdl" x="522.900" y="211.300"/><use href="#hdl" x="564.400" y="211.300"/><use href="#hdl" x="605.600" y="211.300"/>
<use href="#hdl" x="522.900" y="273.400"/><use href="#hdl" x="605.600" y="273.400"/>
<!-- greyed (cropped away) area -->
<rect x="523.400" y="292" width="82.400" height="43.400" fill="#6d6d6d"/>
<path d="M553 293h26l-6 4q-6 6-9 6q-4-1-8-6z" fill="#5c5c5c" filter="url(#blur1)"/>
<path d="M596 293h9.800v42q-3-20-9.800-42z" fill="#757575" filter="url(#blur1)"/>
<!-- photo -->
<g clip-path="url(#photoclip)">
<rect x="523" y="211" width="83" height="83" fill="url(#bgg)"/>
<g filter="url(#blur1)">
<ellipse cx="588" cy="262" rx="16" ry="26" fill="#8b9a9e" opacity="0.750"/>
<ellipse cx="534" cy="240" rx="9" ry="22" fill="#6b777b" opacity="0.800"/>
<ellipse cx="592" cy="226" rx="9" ry="8" fill="#6f7b80" opacity="0.600"/>
<!-- shirt -->
<path d="M527 294v-9.500q3-4 10-6l9-2.500l5 5l6 13z" fill="#d9e0e9"/>
<path d="M573 283l4-3.500l4 3l3 11.500h-12z" fill="#c6ced8"/>
<path d="M584 284l12 4l9 6h-19z" fill="#8f9ca0"/>
<!-- neck -->
<path d="M545.500 274l3.500 10l7 10h17l2.500-11l2-9z" fill="#98521f"/>
<!-- ears -->
<ellipse cx="543.200" cy="256.500" rx="2" ry="5" fill="#b0642f"/>
<ellipse cx="581.600" cy="255.500" rx="2" ry="5.500" fill="#b96c34"/>
<!-- face -->
<path d="M543.600 246q0-13 18.500-13q18.500 0 18.500 13v11q-0.500 11-6 19q-5 8-12.500 8q-7.500 0-12.500-8q-5.500-8-6-19z" fill="url(#skin)"/>
<ellipse cx="549" cy="262" rx="4.500" ry="11" fill="#a9632f" opacity="0.550"/>
<ellipse cx="571" cy="259" rx="4.500" ry="4" fill="#e0a877" opacity="0.700"/>
<ellipse cx="560" cy="241" rx="9" ry="4" fill="#d69860" opacity="0.600"/>
<!-- hair -->
<path d="M544.800 248.500q-3.500-6-4.600-13q-1-9 5-13.500q7-4.500 17.800-3.800q10 0.300 14.500 5q4.800 5 4 12q-0.500 7-2.300 12.300l-1.200-6q-1-6-4.500-8q-6-2.500-13-2q-6.500 0-10.500 2.500q-4 3-4.400 8z" fill="#1e1c1d"/>
<!-- beard stubble -->
<path d="M546.500 263q2 10 6.500 15.500q4 5.500 9.500 5.500q6 0 10-5.500q4.500-6 5.500-15.500q-3 7-7 8.500q-2-3-9-3q-6.500 0-8.500 3q-4-1.500-7-8.500z" fill="#6a3a1a" opacity="0.700"/>
<!-- moustache -->
<path d="M553 269.500q4.500-2.500 9.500-1.600q5-0.900 10 1.600q-5 0.300-10 0.300q-5 0-9.500-0.300z" fill="#4e2a14" opacity="0.900"/>
<!-- mouth -->
<path d="M557 270.600q5.500-1 11.500 0q-1 5.600-5.800 5.600q-4.800 0-5.700-5.600z" fill="#93463a"/>
<path d="M558.400 270.900q4.500-0.800 9 0q-0.500 2.900-4.500 2.900q-4 0-4.500-2.900z" fill="#f3ebe6"/>
<path d="M559 274.200q3.600 0.800 7.400 0q-1 2.200-3.700 2.200q-2.700 0-3.700-2.200z" fill="#dc7d7c"/>
<!-- eyes / brows -->
<path d="M548.400 250.200q4-2 9-0.800M566.600 249.400q5-1.400 9.200 0.800" stroke="#3e2516" stroke-width="1.500"/>
<ellipse cx="553.200" cy="253.600" rx="2.700" ry="1.100" fill="#4a2c1a"/>
<ellipse cx="570.200" cy="253.300" rx="2.700" ry="1.100" fill="#4a2c1a"/>
<!-- nose -->
<ellipse cx="562.300" cy="262" rx="3.200" ry="3.600" fill="#e3b081" opacity="0.900"/>
<path d="M558.600 266q3.700 1.600 7.400 0" stroke="#9b5a2e" stroke-width="0.900"/>
</g>
</g>
<!-- crop marks -->
<g fill="#000" stroke="#e8e8e8" stroke-width="0.700" stroke-opacity="0.850">
<path d="M523.700 212.200h23.400v5.300h-18.100v18.500h-5.300z"/>
<rect x="552.400" y="212.200" width="24" height="5.300"/>
<path d="M605 212.200h-23.400v5.300h18.100v18.500h5.300z"/>
<rect x="523.700" y="241" width="5.300" height="23.400"/>
<rect x="599.700" y="241" width="5.300" height="23.400"/>
<path d="M523.700 292.700h23.400v-5.300h-18.100v-18h-5.300z"/>
<rect x="552.400" y="287.400" width="24" height="5.300"/>
<path d="M605 292.700h-23.400v-5.300h18.100v-18h5.300z"/>
</g>
<!-- bottom handles -->
<use href="#hdl" x="522.900" y="335.400"/><use href="#hdl" x="564.400" y="335.400"/><use href="#hdl" x="605.600" y="335.400"/>
</svg>
<!--DOC-END-->

<!-- ===== scrollbar ===== -->


<!-- ===== status bar ===== -->
<div class="a" id="statusbar" style="left:0;top:938px;width:1536px;height:36px;background:#f3f3f3;"></div>
<div class="a" style="left:0;top:938px;width:1536px;height:1px;background:#e0e0e0;"></div>
<div class="a" style="left:0;top:971px;width:1536px;height:3px;background:linear-gradient(#e6e9ec,#c3ccd5 45%,#a6b4c1);"></div>
<!--STATUS-START-->
<svg id="status" width="1536" height="974" viewBox="0 0 1536 974" style="left:0;top:0" fill="none" stroke="none">
<!-- vertical scrollbar -->
<rect x="1517" y="201" width="19" height="737" fill="#f0f0f0"/>
<rect x="1518" y="201.900" width="16.600" height="17.400" fill="#fff" stroke="#b9b9b9" stroke-width="1"/>
<path d="M1522.600 212.700l3.900-4.100l3.900 4.100z" fill="#222"/>
<rect x="1518" y="219.300" width="16.600" height="639.700" fill="#fff" stroke="#b9b9b9" stroke-width="1"/>
<rect x="1518" y="920.200" width="16.600" height="17.200" fill="#fff" stroke="#b9b9b9" stroke-width="1"/>
<path d="M1522.400 926.900l4 4.300l4-4.300z" fill="#222"/>
<!-- proofing icon -->
<path d="M183.600 950v11.800M183.600 950.300q-0.300-1-1.500-1h-4q-1 0-1 1v9q0 1 1 1h4q1.200 0 1.500 0.800M183.600 950.300q0.300-1 1.500-1h4.300q1 0 1 1v2M190.400 957.400v2q0 1-1 1h-4.300q-1.200 0-1.500 0.800" stroke="#a2a2a2" stroke-width="1"/>
<path d="M186 955.400l1.600 1.600l4.100-3.900" stroke="#666" stroke-width="1.500"/>
<!-- accessibility icon -->
<path d="M445.600 962.400a6.300 6.300 0 1 1 -0.800-12.400" stroke="#444" stroke-width="1.300"/>
<path d="M444.600 949.800v5.600h4.600" stroke="#444" stroke-width="1.300"/>
<path d="M446.600 955.800q0.200-2.600 2.800-2.600q2.600 0.200 2.600 2.400q0 1.600-1.600 2.400q-1 0.600-1 2" stroke="#444" stroke-width="1.400"/>
<rect x="448.600" y="962" width="1.600" height="1.700" fill="#444"/>
<!-- view buttons -->
<rect x="1246.600" y="939" width="43.800" height="33.500" fill="#c6c6c6"/>
<g stroke="#7d7d7d" stroke-width="0.900">
<path d="M1224.900 951.200v10.600M1224.900 951.200q-3-1.600-7-1.200v10q4-0.400 7 1.200q3-1.600 7-1.200v-10q-4-0.400-7 1.200z"/>
<path d="M1219.400 952.800h3.800M1219.400 954.800h3.800M1219.400 956.800h3.800M1219.400 958.800h3.800M1226.600 952.800h3.800M1226.600 954.800h3.800M1226.600 956.800h3.800M1226.600 958.800h3.800" stroke-width="0.700"/>
</g>
<rect x="1262.400" y="949.900" width="13" height="12.200" stroke="#6b6b6b" stroke-width="0.900"/>
<path d="M1264.600 952.400h8.600M1264.600 954.400h8.600M1264.600 956.400h8.600M1264.600 958.400h8.600M1264.600 960.200h8.600" stroke="#6b6b6b" stroke-width="0.800"/>
<path d="M1317.400 955v-5.200h-10.800v11.400h6" stroke="#7d7d7d" stroke-width="0.900"/>
<path d="M1308.600 952h6.800M1308.600 954.200h6.800M1308.600 956.400h4.600M1308.600 958.600h3.800" stroke="#8a8a8a" stroke-width="0.700"/>
<circle cx="1316.600" cy="959.400" r="3.700" fill="#f3f3f3" stroke="#555" stroke-width="1"/>
<path d="M1314.200 957.400q2 0.400 2.400 2.200q1.200-0.200 1.800 1.400l-1.400 1.800q-3 0.400-3.800-2.400z" fill="#555"/>
<!-- zoom slider -->
<path d="M1340.200 955.100h8.600" stroke="#6b6b6b" stroke-width="1"/>
<path d="M1354.200 955.100h106.100" stroke="#444" stroke-width="1.400"/>
<rect x="1393.900" y="950" width="5.600" height="11.600" fill="#444"/>
<path d="M1407.200 952.200v6.600" stroke="#444" stroke-width="1.100"/>
<path d="M1465.400 955.100h8.200M1469.500 951.100v8.100" stroke="#6b6b6b" stroke-width="1"/>
</svg>
<!--STATUS-END-->

<!-- ===== all text ===== -->
<span class="t" style="left:458.00px;top:13px;font-size:13.8px;color:#ffffff;transform:scaleX(0.9442);">New Microsoft Word Document.docx [Compatibility Mode]  -  Word</span>
<span class="t" style="left:895.50px;top:12px;font-size:11.8px;color:#bccae2;transform:scaleX(0.9105);">Picture Tools</span>
<span class="t" style="left:1243.00px;top:13px;font-size:13.8px;color:#ffffff;transform:scaleX(0.8772);">Taffy Tan</span>
<span class="t" style="left:26.00px;top:46px;font-size:13.8px;color:#ffffff;transform:scaleX(0.8096);">File</span>
<span class="t" style="left:87.00px;top:46px;font-size:13.8px;color:#ffffff;transform:scaleX(0.9508);">Home</span>
<span class="t" style="left:155.00px;top:46px;font-size:13.8px;color:#ffffff;transform:scaleX(0.8981);">Insert</span>
<span class="t" style="left:220.00px;top:46px;font-size:13.8px;color:#ffffff;transform:scaleX(0.9005);">Draw</span>
<span class="t" style="left:282.50px;top:46px;font-size:13.8px;color:#ffffff;transform:scaleX(0.8963);">Design</span>
<span class="t" style="left:355.00px;top:46px;font-size:13.8px;color:#ffffff;transform:scaleX(0.9050);">Layout</span>
<span class="t" style="left:426.00px;top:46px;font-size:13.8px;color:#ffffff;transform:scaleX(0.8361);">References</span>
<span class="t" style="left:519.00px;top:46px;font-size:13.8px;color:#ffffff;transform:scaleX(0.9188);">Mailings</span>
<span class="t" style="left:599.50px;top:46px;font-size:13.8px;color:#ffffff;transform:scaleX(0.8398);">Review</span>
<span class="t" style="left:671.00px;top:46px;font-size:13.8px;color:#ffffff;transform:scaleX(0.8936);">View</span>
<span class="t" style="left:731.00px;top:46px;font-size:13.8px;color:#ffffff;transform:scaleX(0.9158);">Help</span>
<span class="t" style="left:791.00px;top:46px;font-size:13.8px;color:#ffffff;transform:scaleX(0.8511);">TransTools</span>
<span class="t" style="left:884.00px;top:46px;font-size:13.8px;color:#2b579a;transform:scaleX(0.9009);">Picture Format</span>
<span class="t" style="left:1026.00px;top:46px;font-size:13.8px;color:#ffffff;transform:scaleX(0.9397);">Tell me what you want to do</span>
<span class="t" style="left:27.00px;top:124px;font-size:12.8px;color:#3d3d3d;transform:scaleX(0.9548);">Remove</span>
<span class="t" style="left:16.00px;top:141px;font-size:12.8px;color:#3d3d3d;transform:scaleX(0.9737);">Background</span>
<span class="t" style="left:89.50px;top:124px;font-size:12.8px;color:#3d3d3d;transform:scaleX(0.9704);">Corrections</span>
<span class="t" style="left:196.00px;top:87px;font-size:12.8px;color:#3d3d3d;transform:scaleX(1.0133);">Color</span>
<span class="t" style="left:196.00px;top:122px;font-size:12.8px;color:#3d3d3d;transform:scaleX(0.9772);">Artistic Effects</span>
<span class="t" style="left:703.75px;top:82px;font-size:12.8px;color:#3d3d3d;transform:scaleX(0.9566);">Picture Border</span>
<span class="t" style="left:706.00px;top:118px;font-size:12.8px;color:#3d3d3d;transform:scaleX(0.9449);">Picture Effects</span>
<span class="t" style="left:706.00px;top:151px;font-size:12.8px;color:#a6a6a6;transform:scaleX(0.9656);">Picture Layout</span>
<span class="t" style="left:851.00px;top:124px;font-size:12.8px;color:#3d3d3d;transform:scaleX(1.0711);">Alt</span>
<span class="t" style="left:849.00px;top:141px;font-size:12.8px;color:#3d3d3d;transform:scaleX(0.8729);">Text</span>
<span class="t" style="left:919.00px;top:124px;font-size:12.8px;color:#3d3d3d;transform:scaleX(0.9664);">Position</span>
<span class="t" style="left:983.00px;top:124px;font-size:12.8px;color:#3d3d3d;transform:scaleX(0.9722);">Wrap</span>
<span class="t" style="left:981.75px;top:141px;font-size:12.8px;color:#3d3d3d;transform:scaleX(0.8623);">Text</span>
<span class="t" style="left:1063.00px;top:85px;font-size:12.8px;color:#a6a6a6;transform:scaleX(0.9705);">Bring Forward</span>
<span class="t" style="left:1063.00px;top:118px;font-size:12.8px;color:#a6a6a6;transform:scaleX(0.9427);">Send Backward</span>
<span class="t" style="left:1066.00px;top:151px;font-size:12.8px;color:#3d3d3d;transform:scaleX(0.9292);">Selection Pane</span>
<span class="t" style="left:1288.00px;top:132px;font-size:12.8px;color:#3d3d3d;transform:scaleX(0.9730);">Crop</span>
<span class="t" style="left:1373.00px;top:99px;font-size:12.6px;color:#3d3d3d;transform:scaleX(0.9819);">2.54 cm</span>
<span class="t" style="left:1373.00px;top:146px;font-size:12.6px;color:#3d3d3d;transform:scaleX(0.9819);">2.54 cm</span>
<span class="t" style="left:174.00px;top:186px;font-size:11.6px;color:#5c5c5c;transform:scaleX(0.9617);">Adjust</span>
<span class="t" style="left:557.00px;top:186px;font-size:11.6px;color:#5c5c5c;transform:scaleX(0.9169);">Picture Styles</span>
<span class="t" style="left:828.75px;top:186px;font-size:11.6px;color:#5c5c5c;transform:scaleX(0.9384);">Accessibility</span>
<span class="t" style="left:1058.00px;top:186px;font-size:11.6px;color:#5c5c5c;transform:scaleX(0.9697);">Arrange</span>
<span class="t" style="left:1341.75px;top:186px;font-size:11.6px;color:#5c5c5c;transform:scaleX(0.8532);">Size</span>
<span class="t" style="left:18.75px;top:951px;font-size:11.4px;color:#4e4e4e;transform:scaleX(0.9308);">Page 1 of 1</span>
<span class="t" style="left:105.00px;top:951px;font-size:11.4px;color:#4e4e4e;transform:scaleX(0.9902);">0 words</span>
<span class="t" style="left:223.25px;top:951px;font-size:11.4px;color:#4e4e4e;transform:scaleX(0.9485);">English (United States)</span>
<span class="t" style="left:455.50px;top:951px;font-size:11.4px;color:#4e4e4e;transform:scaleX(0.9516);">Accessibility: Unavailable</span>
<span class="t" style="left:1493.30px;top:951px;font-size:11.4px;color:#5e5e5e;transform:scaleX(0.9644);">80%</span>
<span class="t" style="left:606.30px;top:285px;font-size:9px;color:#b0b0b0;transform:scaleX(0.7750);">↵</span>

</div>
</body>
</html>
